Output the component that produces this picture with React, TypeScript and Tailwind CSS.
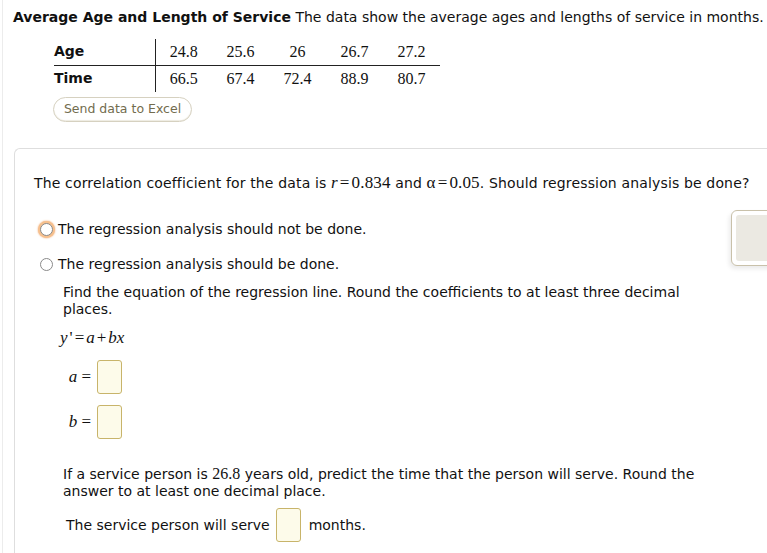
import React from "react";

const ages = ["24.8", "25.6", "26", "26.7", "27.2"];
const times = ["66.5", "67.4", "72.4", "88.9", "80.7"];

function AnswerBox() {
  return (
    <span className="inline-block w-[25px] h-[34px] rounded-[3px] border border-[#c8b46a] bg-[#fdfbea] align-middle" />
  );
}

function Radio({ focused }: { focused?: boolean }) {
  return (
    <span
      className={
        "inline-flex items-center justify-center w-[17px] h-[17px] rounded-full " +
        (focused ? "bg-[#f6c08e] shadow-[0_0_2px_#f0a060]" : "")
      }
    >
      <span className="block w-[13px] h-[13px] rounded-full border border-[#8a8a8a] bg-white" />
    </span>
  );
}

const serif = "font-['Liberation_Serif',serif]";

export default function App() {
  return (
    <div className="relative min-h-[553px] bg-white text-[14px] text-[#111] font-['DejaVu_Sans','Verdana',sans-serif] overflow-hidden">
      <div className="absolute left-[2px] top-0 bottom-0 w-px bg-[#ececec]" />

      {/* header */}
      <div className="pl-[13px] pt-[9px] leading-[16px] whitespace-nowrap">
        <span className="font-bold">Average Age and Length of Service</span>{" "}
        The data show the average ages and lengths of service in months.
      </div>

      {/* data table */}
      <table className="ml-[54px] mt-[14px] border-collapse">
        <tbody>
          <tr className="h-[26px]">
            <td className="w-[101px] font-bold border-r border-[#222] border-b">Age</td>
            {ages.map((a) => (
              <td key={a} className={"w-[57px] text-center border-b border-[#222] text-[16px] " + serif}>
                {a}
              </td>
            ))}
          </tr>
          <tr className="h-[27px]">
            <td className="font-bold border-r border-[#222]">Time</td>
            {times.map((t) => (
              <td key={t} className={"text-center text-[16px] " + serif}>
                {t}
              </td>
            ))}
          </tr>
        </tbody>
      </table>

      <button className="ml-[53px] mt-[5px] h-[25px] w-[139px] rounded-full border border-[#d6d1c0] bg-white text-[12.5px] text-[#726c4e] shadow-[inset_0_-1px_1px_#eeebe2]">
        Send data to Excel
      </button>

      {/* question panel */}
      <div className="ml-[14px] mt-[26px] border-l border-t border-[#dedede] rounded-tl-[6px] pt-[25px] pl-[19px] pb-[14px]">
        <p className="leading-[17px] whitespace-nowrap tracking-[0.15px]">
          The correlation coefficient for the data is{" "}
          <span className={"text-[17px] " + serif}>
            <i>r</i>
            <span className="mx-[2px]">=</span>0.834
          </span>{" "}
          and{" "}
          <span className={"text-[17px] " + serif}>
            α<span className="mx-[2px]">=</span>0.05
          </span>
          . Should regression analysis be done?
        </p>

        <div className="mt-[27px] flex items-center gap-[3px] ml-[4px] h-[20px]">
          <Radio focused />
          <span>The regression analysis should not be done.</span>
        </div>
        <div className="mt-[15px] flex items-center gap-[3px] ml-[4px] h-[20px]">
          <Radio />
          <span>The regression analysis should be done.</span>
        </div>

        <div className="pl-[29px] mt-[10px]">
          <p className="leading-[17px] w-[640px]">
            Find the equation of the regression line. Round the coefficients to at least three
            decimal places.
          </p>
          <p className={"mt-[10px] -ml-[3px] text-[17px] italic leading-[20px] " + serif}>
            y<span className="not-italic ml-[2px]">'</span>
            <span className="not-italic mx-[2px]">=</span>a
            <span className="not-italic mx-[2px]">+</span>bx
          </p>

          <div className="mt-[12px] flex flex-col gap-[11px] pl-[3px]">
            <div className="flex items-center gap-[6px]">
              <span className={"text-[17px] w-[25px] text-right " + serif}>
                <i>a</i> =
              </span>
              <AnswerBox />
            </div>
            <div className="flex items-center gap-[6px]">
              <span className={"text-[17px] w-[25px] text-right " + serif}>
                <i>b</i> =
              </span>
              <AnswerBox />
            </div>
          </div>

          <p className="mt-[26px] leading-[17px] w-[650px]">
            If a service person is{" "}
            <span className={"inline-block text-[16px] leading-[17px] " + serif}>26.8</span> years
            old, predict the time that the person will serve. Round the answer to at least one
            decimal place.
          </p>
          <div className="mt-[8px] pl-[3px] flex items-center gap-[6px]">
            <span>The service person will serve</span>
            <AnswerBox />
            <span className="ml-[2px]">months.</span>
          </div>
        </div>
      </div>

      {/* side box, partially offscreen */}
      <div className="absolute left-[731px] top-[210px] w-[60px] h-[56px] rounded-[6px] border border-[#c9c1aa] bg-white p-[4px] shadow-[-2px_3px_4px_rgba(0,0,0,0.08)]">
        <div className="w-full h-full rounded-[3px] bg-[#ebe9e2]" />
      </div>
    </div>
  );
}
